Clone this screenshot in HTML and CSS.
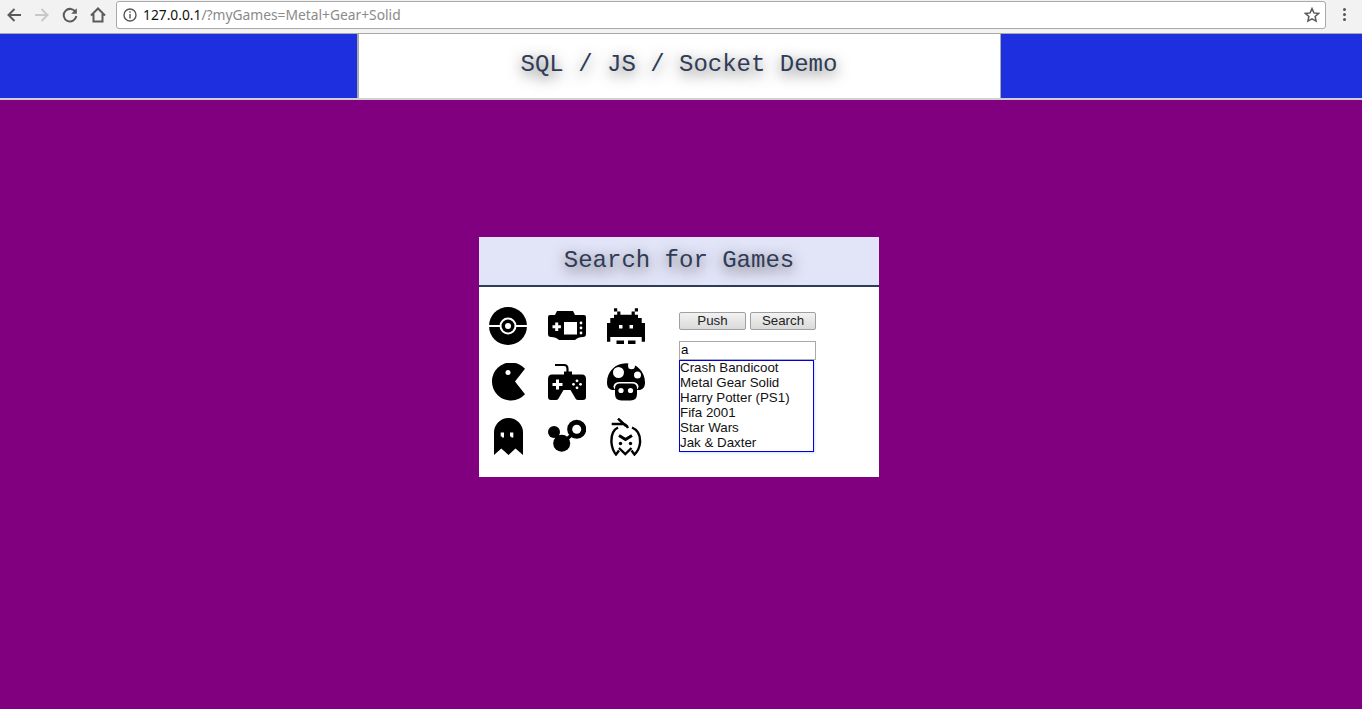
FILE: index.html
```html
<!DOCTYPE html>
<html lang="en">
<head>
<meta charset="UTF-8">
<meta name="viewport" content="width=device-width, initial-scale=1.0">
<title>SQL / JS / Socket Demo</title>
<link rel="stylesheet" href="styles.css">
</head>
<body>
    <div class="toolbar">
        <svg class="tool-icon" viewBox="0 0 16 16"><path d="M15 8H2.5M8.5 2L2.5 8l6 6" /></svg>
        <svg class="tool-icon off" viewBox="0 0 16 16"><path d="M1 8h12.5M7.5 2l6 6-6 6" /></svg>
        <svg class="tool-icon" viewBox="0 0 16 16"><path d="M13.6 5.2A6.3 6.3 0 1 0 14.3 9" /><path class="solid" d="M14.8 1.2v5.6H9.2z" /></svg>
        <svg class="tool-icon" viewBox="0 0 16 16"><path d="M1 8.5L8 1.5l7 7M3.5 7v7.5h9V7" /></svg>
        <div class="omnibox">
            <svg class="info-icon" viewBox="0 0 14 14"><circle cx="7" cy="7" r="6" /><path d="M7 6v4.5M7 3.2v1.6" /></svg>
            <span class="url"><span class="host">127.0.0.1</span>/?myGames=Metal+Gear+Solid</span>
            <svg class="star-icon" viewBox="0 0 16 16"><path d="M8 1.6l1.9 4.3 4.7.5-3.5 3.1 1 4.6L8 11.8l-4.1 2.3 1-4.6-3.5-3.1 4.7-.5z" /></svg>
        </div>
        <div class="menu-dots"><span></span><span></span><span></span></div>
    </div>

    <header class="top">
        <h1 class="top-title">SQL / JS / Socket Demo</h1>
    </header>

    <main class="main">
        <section class="panel">
            <h2 class="panel-title">Search for Games</h2>
            <div class="panel-body">
                <div class="icons">
                    <!-- pokeball -->
                    <svg viewBox="0 0 38 38"><circle cx="19" cy="19" r="19" /><rect class="w" y="18" width="38" height="2" /><circle class="w" cx="19" cy="19" r="8.5" /><circle cx="19" cy="19" r="6.5" /><circle class="w" cx="19" cy="19" r="3" /></svg>
                    <!-- handheld -->
                    <svg viewBox="0 0 38 38"><path d="M0 10Q0 8 2 8H7L9 4H25L27 8H36Q38 8 38 10V27Q38 30 35 30Q30 30 27 33H11Q8 30 3 30Q0 30 0 27Z" /><path class="w" d="M4.500 18.200H7.200V15.500H10.200V18.200H12.900V21.200H10.200V23.900H7.200V21.200H4.500Z" /><rect class="w" x="16" y="15" width="13" height="12.500" /><circle class="w" cx="33" cy="16" r="1.400" /><circle class="w" cx="33" cy="21" r="1.400" /><circle class="w" cx="33" cy="26" r="1.400" /></svg>
                    <!-- space invader -->
                    <svg viewBox="0 0 38 38"><path d="M7 1.300h3.200v3.200H7zM27.800 1.300H31v3.200h-3.200zM10.200 4.500h3.200v3.200h-3.200zM24.600 4.500h3.200v3.200h-3.200zM7 7.700H31V11H34.700V16H38V34.700H34.700V30H3.300V34.700H0V16H3.300V11H7ZM9.500 33.500H17V37H9.500ZM21 33.500H28.500V37H21Z" /><rect class="w" x="12" y="18" width="3.500" height="3.500" /><rect class="w" x="22.500" y="18" width="3.500" height="3.500" /></svg>

                    <!-- pacman -->
                    <svg viewBox="0 0 38 38"><path d="M36 5.700L26 18.500 36 31.300A19 19 0 1 1 36 5.700Z" /><circle class="w" cx="19" cy="9.500" r="2.500" /></svg>
                    <!-- gamepad -->
                    <svg viewBox="0 0 38 38"><path class="line" d="M7 2H16Q19.500 2 19.500 6V10" /><rect x="16" y="8.500" width="8" height="4" /><path d="M4 11.500H34Q38 11.500 38 16V34Q38 37 35 37H30Q28.500 37 27.500 35.500L22.500 27H15.500L10.500 35.500Q9.500 37 8 37H3Q0 37 0 34V16Q0 11.500 4 11.500Z" /><path class="w" d="M4.500 20H8V16.500H11V20H14.500V23H11V26.500H8V23H4.500Z" /><circle class="w" cx="29" cy="17.800" r="1.400" /><circle class="w" cx="29" cy="24.800" r="1.400" /><circle class="w" cx="25.500" cy="21.300" r="1.400" /><circle class="w" cx="32.500" cy="21.300" r="1.400" /></svg>
                    <!-- mushroom -->
                    <svg viewBox="0 0 38 38"><path d="M19 .3C8 .3 0 9 0 19.500C0 24 2 26.500 5.500 27L8 27V21H30V27L32.500 27C36 26.500 38 24 38 19.500C38 9 30 .3 19 .3Z" /><circle class="w" cx="11.500" cy="9.500" r="5.500" /><circle class="w" cx="24.500" cy="2.700" r="3.500" /><circle class="w" cx="30.500" cy="12" r="3.500" /><rect class="w" x="6.500" y="19" width="25" height="9" rx="6" /><path d="M13 20.500H25Q30 20.500 30 25.500V31Q30 37.500 23.500 37.500H14.500Q8 37.500 8 31V25.500Q8 20.500 13 20.500Z" /><circle class="w" cx="14" cy="27.500" r="2.600" /><circle class="w" cx="23.500" cy="27.500" r="2.600" /></svg>

                    <!-- ghost -->
                    <svg viewBox="0 0 38 38"><path d="M5 37V14.500A14.500 14.500 0 0 1 34 14.500V37L26.500 30.500 19.500 37 12.300 30.500Z" /><path class="w" d="M11.700 14.500H15V19.500H13V18.500H11.700ZM21 14.500H24.300V19.500H22.300V18.500H21Z" /></svg>
                    <!-- three discs -->
                    <svg viewBox="0 0 38 38"><circle cx="28.700" cy="11.300" r="9.500" /><circle class="w" cx="28.700" cy="11.300" r="4.500" /><circle cx="6" cy="14" r="6" /><circle cx="13.700" cy="25.300" r="8.500" /><path class="line thick" d="M6 14L13.700 25.300 23 17.500" /></svg>
                    <!-- angry bird -->
                    <svg viewBox="0 0 38 38"><path class="line bird" d="M4.700 6H16Q19 6 21 10M11 .5L19 8" /><path class="line bird" d="M11 9.500C6 12 4 18 4.500 25C5 30 6.500 33.500 9 36.500L12 32.500M25 9.500C31 12 33.500 18 33 25C32.500 30 30.500 33.500 27.500 36.500L24.500 32.500" /><path class="line bird" d="M12 30L18.300 36 24.500 30" /><path class="line brow" d="M12 17.500L18.500 21.500 25 17.500" /><circle cx="13.500" cy="25.500" r="1.700" /><circle cx="23.500" cy="25.500" r="1.700" /></svg>
                </div>
                <form class="search">
                    <div class="buttons">
                        <button class="btn btn-push" type="button">Push</button>
                        <button class="btn btn-search" type="button">Search</button>
                    </div>
                    <input class="search-input" name="myGames" type="text" value="a">
                    <ul class="results">
                        <li>Crash Bandicoot</li>
                        <li>Metal Gear Solid</li>
                        <li>Harry Potter (PS1)</li>
                        <li>Fifa 2001</li>
                        <li>Star Wars</li>
                        <li>Jak &amp; Daxter</li>
                    </ul>
                </form>
            </div>
        </section>
    </main>
</body>
</html>
```

FILE: styles.css
```css
html, body {
    height: 100%;
}
body {
    margin: 0;
    padding: 0;
    overflow: hidden;
    display: flex;
    flex-direction: column;
    background: purple;
    font-family: "Liberation Sans", Arial, sans-serif;
}

/* browser bar */
.toolbar {
    flex: none;
    display: flex;
    align-items: center;
    padding: 0 0 4px 6px;
    height: 29px;
    background: #f2f2f2;
    border-bottom: 1px solid #a8a8a8;
}
.tool-icon {
    width: 16px;
    height: 16px;
    margin-right: 12px;
    flex: none;
}
.tool-icon path {
    fill: none;
    stroke: #5a5a5a;
    stroke-width: 2;
}
.tool-icon path.solid {
    fill: #5a5a5a;
    stroke: none;
}
.tool-icon.off path {
    stroke: #c8c8c8;
}
.omnibox {
    width: 1210px;
    height: 28px;
    margin: 1px 0 0 -2px;
    box-sizing: border-box;
    display: flex;
    align-items: center;
    padding: 0 5px 0 6px;
    background: #fff;
    border: 1px solid #a9a9a9;
    border-radius: 3px;
}
.info-icon {
    width: 14px;
    height: 14px;
    flex: none;
}
.info-icon circle,
.info-icon path {
    fill: none;
    stroke: #555;
    stroke-width: 1.4;
}
.url {
    margin-left: 6px;
    padding-bottom: 2px;
    flex: 1;
    font: 13.8px "Noto Sans", sans-serif;
    color: #8a8a8a;
}
.url .host {
    color: #111;
}
.star-icon {
    width: 16px;
    height: 16px;
    flex: none;
}
.star-icon path {
    fill: none;
    stroke: #5a5a5a;
    stroke-width: 1.5;
}
.menu-dots {
    margin-left: 17px;
    display: flex;
    flex-direction: column;
    gap: 2px;
}
.menu-dots span {
    width: 3px;
    height: 3px;
    border-radius: 50%;
    background: #555;
}

/* page header */
.top {
    flex: none;
    height: 64px;
    display: flex;
    justify-content: center;
    padding-right: 4px;
    background: #1e2fdf;
    border-bottom: 2px solid #d0d0d0;
}
.top-title {
    width: 644px;
    margin: 0;
    padding-right: 1px;
    box-sizing: border-box;
    background: #fff;
    border-left: 2px solid #aaa;
    border-right: 1px solid #aaa;
    text-align: center;
    font: normal 24px/62px "Liberation Mono", monospace;
    color: #2f3b57;
    text-shadow: 0 4px 14px #555;
}

.main {
    flex: 1;
    display: flex;
    justify-content: center;
    align-items: flex-start;
    padding: 137px 4px 0 0;
}
.panel {
    width: 400px;
    height: 240px;
    background: #fff;
}
.panel-title {
    margin: 0;
    height: 48px;
    background: #e2e4f8;
    border-bottom: 2px solid #2f3b57;
    text-align: center;
    font: normal 24px/47px "Liberation Mono", monospace;
    color: #2f3b57;
    text-shadow: 0 4px 14px #555;
}
.panel-body {
    display: flex;
    padding: 20px 0 0 10px;
}
.icons {
    display: grid;
    grid-template-columns: repeat(3, 38px);
    grid-auto-rows: 38px;
    column-gap: 21px;
    row-gap: 17.500px;
}
.icons svg {
    width: 38px;
    height: 38px;
    display: block;
}
.icons .w {
    fill: #fff;
}
.icons .line {
    fill: none;
    stroke: #000;
    stroke-width: 2.200;
}
.icons .bird {
    stroke-width: 2.400;
}
.icons .brow {
    stroke-width: 3;
}
.icons .thick {
    stroke-width: 3.500;
}
.search {
    margin: 5px 0 0 34px;
    width: 137px;
}
.buttons {
    display: flex;
    gap: 4px;
    margin-bottom: 11px;
}
.btn {
    height: 18px;
    padding: 0 0 2px;
    font: 13.333px "Liberation Sans", sans-serif;
    color: #222;
    background: linear-gradient(#f2f2f2, #dadada);
    border: 1px solid #a0a0a0;
    border-radius: 2px;
}
.btn-push {
    width: 67px;
}
.btn-search {
    width: 66px;
}
.search-input {
    display: block;
    width: 137px;
    height: 19px;
    margin: 0;
    padding: 0 1px 2px;
    box-sizing: border-box;
    border: 1px solid #a9a9a9;
    font: 13.333px "Liberation Sans", sans-serif;
    color: #000;
    outline: none;
}
.results {
    width: 135px;
    height: 92px;
    margin: 0;
    padding: 0;
    box-sizing: border-box;
    list-style: none;
    border: 1px solid #0000e6;
    box-shadow: 1px 1px 2px #cfe0e8;
    font-size: 13.333px;
    line-height: 15px;
    color: #111;
}
.results li:first-child {
    margin-top: -1px;
}
```
